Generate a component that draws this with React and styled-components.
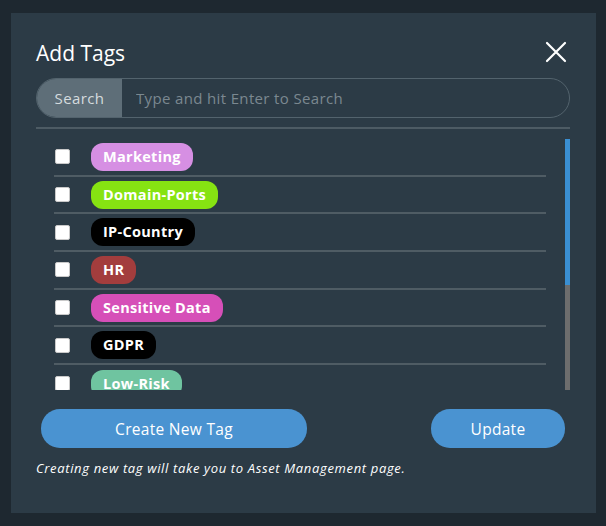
import styled, { createGlobalStyle } from 'styled-components';

const GlobalStyle = createGlobalStyle`
  html, body {
    margin: 0;
    padding: 0;
    background: #1e2830;
    font-family: "Open Sans", "DejaVu Sans", sans-serif;
  }
`;

const tags = [
  { name: 'Marketing', color: '#d68fe3' },
  { name: 'Domain-Ports', color: '#86e312' },
  { name: 'IP-Country', color: '#000000' },
  { name: 'HR', color: '#a33d3d' },
  { name: 'Sensitive Data', color: '#d64fb8' },
  { name: 'GDPR', color: '#000000' },
  { name: 'Low-Risk', color: '#6fc4a0' },
];

const Page = styled.div`
  width: 606px;
  height: 526px;
  padding: 13px 10px 13px 11px;
  box-sizing: border-box;
`;

const Dialog = styled.div`
  background: #2c3b46;
  width: 585px;
  height: 500px;
  box-sizing: border-box;
  padding: 27px 26px 0 25px;
  display: flex;
  flex-direction: column;
`;

const Header = styled.div`
  display: flex;
  justify-content: space-between;
  align-items: flex-start;
  height: 38px;
`;

const Title = styled.h2`
  margin: 0;
  color: #ffffff;
  font-size: 21px;
  font-weight: 500;
  line-height: 26px;
`;

const Close = styled.button`
  background: none;
  border: none;
  padding: 0;
  margin: 0 2px 0 0;
  width: 24px;
  height: 24px;
  cursor: pointer;
  svg { display: block; }
`;

const SearchBox = styled.div`
  display: flex;
  height: 40px;
  border: 1px solid #53636d;
  border-radius: 20px;
  overflow: hidden;
  box-sizing: border-box;
`;

const SearchLabel = styled.span`
  background: #5e6e78;
  color: #d5dbde;
  font-size: 15px;
  letter-spacing: 0.4px;
  width: 85px;
  display: flex;
  align-items: center;
  justify-content: center;
`;

const SearchInput = styled.input`
  flex: 1;
  background: transparent;
  border: none;
  outline: none;
  color: #fff;
  font-family: inherit;
  font-size: 15px;
  letter-spacing: 0.35px;
  padding: 0 14px;
  &::placeholder { color: #7b8890; }
`;

const Divider = styled.div`
  height: 2px;
  background: #4d5b64;
  margin-top: 9px;
`;

const ListArea = styled.div`
  display: flex;
  margin-top: 10px;
  height: 251px;
`;

const List = styled.div`
  flex: 1;
  overflow: hidden;
  padding-left: 18px;
`;

const Track = styled.div`
  width: 5px;
  background: #6d6d6d;
  display: flex;
  flex-direction: column;
`;

const Thumb = styled.div`
  background: #3a8fd2;
`;

const Row = styled.label`
  display: flex;
  align-items: center;
  height: 37.7px;
  flex-shrink: 0;
  box-sizing: border-box;
  border-bottom: 2px solid #4f5c64;
  margin-right: 19px;
  &:last-child { border-bottom: none; }
`;

const Check = styled.input`
  appearance: none;
  width: 15px;
  height: 15px;
  margin: 0 21px 0 1px;
  background: #ffffff;
  border: 1px solid #c9c9c9;
  border-radius: 2px;
`;

const Pill = styled.span`
  background: ${p => p.$color};
  color: #ffffff;
  font-size: 14.5px;
  font-weight: 700;
  letter-spacing: 0.3px;
  height: 28px;
  line-height: 28px;
  padding: 0 12px;
  border-radius: 12px;
`;

const Actions = styled.div`
  display: flex;
  justify-content: space-between;
  padding: 0 5px 0 5px;
  margin-top: 19px;
`;

const Button = styled.button`
  background: #4a93d1;
  color: #ffffff;
  border: none;
  border-radius: 19px;
  height: 39px;
  width: ${p => p.$width}px;
  font-family: inherit;
  font-size: 15.5px;
  letter-spacing: 0.3px;
  cursor: pointer;
`;

const Note = styled.p`
  margin: 11px 0 0 0;
  color: #ffffff;
  font-size: 13px;
  letter-spacing: 0.65px;
  font-style: italic;
`;

export default function App() {
  return (
    <Page>
      <GlobalStyle />
      <Dialog>
        <Header>
          <Title>Add Tags</Title>
          <Close aria-label="close">
            <svg width="24" height="24" viewBox="0 0 24 24">
              <path d="M3 3 L21 21 M21 3 L3 21" stroke="#ffffff" strokeWidth="2.2" strokeLinecap="round" />
            </svg>
          </Close>
        </Header>
        <SearchBox>
          <SearchLabel>Search</SearchLabel>
          <SearchInput placeholder="Type and hit Enter to Search" />
        </SearchBox>
        <Divider />
        <ListArea>
          <List>
            {tags.map(t => (
              <Row key={t.name}>
                <Check type="checkbox" />
                <Pill $color={t.color}>{t.name}</Pill>
              </Row>
            ))}
          </List>
          <Track>
            <Thumb style={{ height: '58%' }} />
          </Track>
        </ListArea>
        <Actions>
          <Button $width={266}>Create New Tag</Button>
          <Button $width={134}>Update</Button>
        </Actions>
        <Note>Creating new tag will take you to Asset Management page.</Note>
      </Dialog>
    </Page>
  );
}
